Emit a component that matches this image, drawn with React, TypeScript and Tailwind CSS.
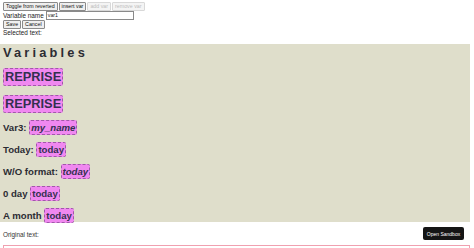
import React from "react";

const Tag = ({ children, italic = false, big = false }: { children: React.ReactNode; italic?: boolean; big?: boolean }) => (
  <span
    className={`inline-block bg-[#f088f0] border border-dashed border-[#a05aa8] rounded-[2px] px-[1px] py-[1px] text-[#33304f] ${
      big ? "text-[12.8px] leading-[14px]" : "text-[9.6px] leading-[11px]"
    } ${italic ? "italic" : ""}`}
  >
    {children}
  </span>
);

const Btn = ({ children, disabled = false }: { children: React.ReactNode; disabled?: boolean }) => (
  <button
    disabled={disabled}
    className={`h-[9px] px-[2px] text-[5.3px] leading-[7px] rounded-[1px] border ${
      disabled ? "border-[#d8d8d8] bg-[#f4f4f4] text-[#bcbcbc]" : "border-[#8a8a8a] bg-[#efefef] text-[#111]"
    }`}
  >
    {children}
  </button>
);

export default function App() {
  return (
    <div className="relative w-[474px] h-[248px] overflow-hidden bg-white font-['Liberation_Sans',Arial,sans-serif] text-[#222]">
      <div className="px-[3px] pt-[2px]">
        <div className="flex gap-[1px]">
          <Btn>Toggle from reverted</Btn>
          <Btn>insert var</Btn>
          <Btn disabled>add var</Btn>
          <Btn disabled>remove var</Btn>
        </div>
        <div className="flex items-center h-[9px] text-[6.4px] leading-[9px]">
          <span className="mr-[2px]">Variable name</span>
          <div className="w-[88px] h-[9px] border border-[#8a8a8a] text-[5.3px] leading-[7px] px-[1px]">var1</div>
        </div>
        <div className="flex gap-[1px]">
          <Btn>Save</Btn>
          <Btn>Cancel</Btn>
        </div>
        <div className="text-[6.4px] leading-[8px]">Selected text:</div>
      </div>
      <div className="mt-[7px] w-[470px] h-[178px] bg-[#dfdecb] px-[3px] pt-[1px] text-[#2c2c33] font-bold">
        <div className="text-[12.8px] leading-[15px] tracking-[0.25em]">Variables</div>
        <div className="mt-[8px] h-[18px] flex items-start">
          <Tag big>REPRISE</Tag>
        </div>
        <div className="mt-[9px] h-[18px] flex items-start">
          <Tag big>REPRISE</Tag>
        </div>
        <div className="mt-[7px] h-[15px] text-[9.6px] leading-[15px]">
          Var3: <Tag italic>my_name</Tag>
        </div>
        <div className="mt-[7px] h-[15px] text-[9.6px] leading-[15px]">
          Today: <Tag>today</Tag>
        </div>
        <div className="mt-[7px] h-[15px] text-[9.6px] leading-[15px]">
          W/O format: <Tag italic>today</Tag>
        </div>
        <div className="mt-[7px] h-[15px] text-[9.6px] leading-[15px]">
          0 day <Tag>today</Tag>
        </div>
        <div className="mt-[7px] h-[15px] text-[9.6px] leading-[15px]">
          A month <Tag>today</Tag>
        </div>
      </div>
      <div className="px-[3px] mt-[9px] text-[6.4px] leading-[8px] text-[#333]">Original text:</div>
      <div className="mx-[3px] mt-[6px] w-[467px] h-[20px] border border-[#f0a0b0]" />
      <div className="absolute left-[423px] top-[227px] w-[41px] h-[13px] bg-[#151515] rounded-[2px] flex items-center justify-center text-white text-[5px] leading-[6px]">
        Open Sandbox
      </div>
    </div>
  );
}
